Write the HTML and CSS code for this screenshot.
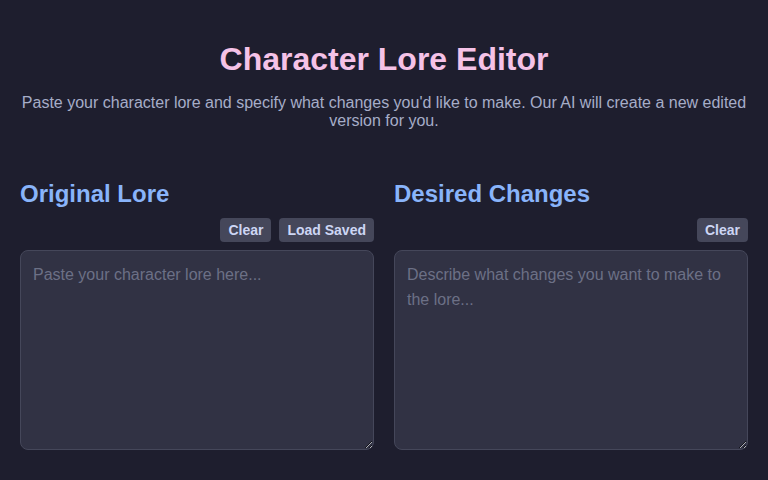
FILE: index.html
```html
<!DOCTYPE html>
<html lang="en">
<head>
<meta charset="utf-8">
<title>Character Lore Editor</title>
<link rel="stylesheet" href="styles.css">
</head>
<body>
<div class="page">
  <header class="header">
    <h1 class="title">Character Lore Editor</h1>
    <p class="subtitle">Paste your character lore and specify what changes you'd like to make. Our AI will create a new edited version for you.</p>
  </header>
  <main class="columns">
    <section class="col">
      <h2 class="col-title">Original Lore</h2>
      <div class="actions">
        <button class="btn">Clear</button>
        <button class="btn">Load Saved</button>
      </div>
      <textarea class="field" placeholder="Paste your character lore here..."></textarea>
    </section>
    <section class="col">
      <h2 class="col-title">Desired Changes</h2>
      <div class="actions">
        <button class="btn">Clear</button>
      </div>
      <textarea class="field" placeholder="Describe what changes you want to make to the lore..."></textarea>
    </section>
  </main>
</div>
</body>
</html>
```
FILE: styles.css
```css
* { box-sizing: border-box; }
html, body {
  margin: 0;
  background: #1e1e2e;
  color: #cdd6f4;
  font-family: "Liberation Sans", Arial, sans-serif;
}
.page {
  padding: 20px;
}
.header {
  text-align: center;
}
.title {
  margin: 21px 0 0;
  font-size: 32px;
  line-height: 37px;
  font-weight: bold;
  color: #f5c2e7;
}
.subtitle {
  margin: 16px 0 0;
  font-size: 16px;
  line-height: 18px;
  color: #a6adc8;
}
.columns {
  display: grid;
  grid-template-columns: 1fr 1fr;
  gap: 20px;
  margin-top: 50px;
}
.col {
  display: flex;
  flex-direction: column;
}
.col-title {
  margin: 0;
  font-size: 24px;
  line-height: 28px;
  font-weight: bold;
  color: #89b4fa;
}
.actions {
  display: flex;
  justify-content: flex-end;
  gap: 8px;
  margin-top: 10px;
  margin-bottom: 8px;
}
.btn {
  font-family: "Liberation Sans", Arial, sans-serif;
  font-size: 14px;
  font-weight: bold;
  line-height: 16px;
  padding: 4px 8px;
  height: 24px;
  border: none;
  border-radius: 4px;
  background: #45475a;
  color: #cdd6f4;
}
.field {
  display: block;
  width: 100%;
  height: 200px;
  padding: 11px 12px;
  border: 1px solid #45475a;
  border-radius: 8px;
  background: #313244;
  color: #cdd6f4;
  font-family: "Liberation Sans", Arial, sans-serif;
  font-size: 16px;
  line-height: 25px;
  resize: vertical;
}
.field::placeholder {
  color: #6c7086;
}
```
